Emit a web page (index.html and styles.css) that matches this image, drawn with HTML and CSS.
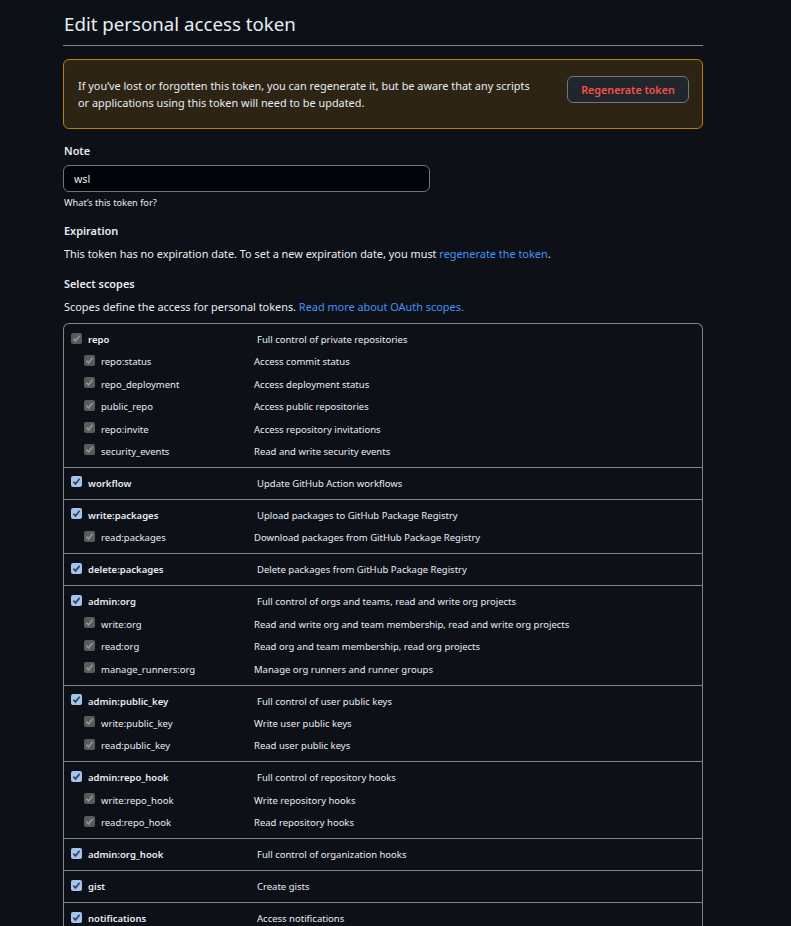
FILE: index.html
```html
<!DOCTYPE html>
<html lang="en">
<head>
<meta charset="utf-8">
<title>Edit personal access token</title>
<link rel="stylesheet" href="styles.css">
</head>
<body>
<div class="page">
  <h1 class="title">Edit personal access token</h1>

  <div class="flash">
    <p>If you’ve lost or forgotten this token, you can regenerate it, but be aware that any scripts<br>or applications using this token will need to be updated.</p>
    <button class="btn">Regenerate token</button>
  </div>

  <div class="label first">Note</div>
  <input class="input" type="text" value="wsl">
  <div class="hint">What’s this token for?</div>

  <div class="label">Expiration</div>
  <div class="text">This token has no expiration date. To set a new expiration date, you must <a href="#">regenerate the token</a>.</div>

  <div class="label">Select scopes</div>
  <div class="text">Scopes define the access for personal tokens. <a href="#">Read more about OAuth scopes.</a></div>

  <div class="scopes">
    <div class="group">
      <div class="row parent"><span class="cb off"></span><span class="name">repo</span><span class="desc">Full control of private repositories</span></div>
      <div class="row child"><span class="cb off"></span><span class="name">repo:status</span><span class="desc">Access commit status</span></div>
      <div class="row child"><span class="cb off"></span><span class="name">repo_deployment</span><span class="desc">Access deployment status</span></div>
      <div class="row child"><span class="cb off"></span><span class="name">public_repo</span><span class="desc">Access public repositories</span></div>
      <div class="row child"><span class="cb off"></span><span class="name">repo:invite</span><span class="desc">Access repository invitations</span></div>
      <div class="row child"><span class="cb off"></span><span class="name">security_events</span><span class="desc">Read and write security events</span></div>
    </div>
    <div class="group">
      <div class="row parent"><span class="cb on"></span><span class="name">workflow</span><span class="desc">Update GitHub Action workflows</span></div>
    </div>
    <div class="group">
      <div class="row parent"><span class="cb on"></span><span class="name">write:packages</span><span class="desc">Upload packages to GitHub Package Registry</span></div>
      <div class="row child"><span class="cb off"></span><span class="name">read:packages</span><span class="desc">Download packages from GitHub Package Registry</span></div>
    </div>
    <div class="group">
      <div class="row parent"><span class="cb on"></span><span class="name">delete:packages</span><span class="desc">Delete packages from GitHub Package Registry</span></div>
    </div>
    <div class="group">
      <div class="row parent"><span class="cb on"></span><span class="name">admin:org</span><span class="desc">Full control of orgs and teams, read and write org projects</span></div>
      <div class="row child"><span class="cb off"></span><span class="name">write:org</span><span class="desc">Read and write org and team membership, read and write org projects</span></div>
      <div class="row child"><span class="cb off"></span><span class="name">read:org</span><span class="desc">Read org and team membership, read org projects</span></div>
      <div class="row child"><span class="cb off"></span><span class="name">manage_runners:org</span><span class="desc">Manage org runners and runner groups</span></div>
    </div>
    <div class="group">
      <div class="row parent"><span class="cb on"></span><span class="name">admin:public_key</span><span class="desc">Full control of user public keys</span></div>
      <div class="row child"><span class="cb off"></span><span class="name">write:public_key</span><span class="desc">Write user public keys</span></div>
      <div class="row child"><span class="cb off"></span><span class="name">read:public_key</span><span class="desc">Read user public keys</span></div>
    </div>
    <div class="group">
      <div class="row parent"><span class="cb on"></span><span class="name">admin:repo_hook</span><span class="desc">Full control of repository hooks</span></div>
      <div class="row child"><span class="cb off"></span><span class="name">write:repo_hook</span><span class="desc">Write repository hooks</span></div>
      <div class="row child"><span class="cb off"></span><span class="name">read:repo_hook</span><span class="desc">Read repository hooks</span></div>
    </div>
    <div class="group">
      <div class="row parent"><span class="cb on"></span><span class="name">admin:org_hook</span><span class="desc">Full control of organization hooks</span></div>
    </div>
    <div class="group">
      <div class="row parent"><span class="cb on"></span><span class="name">gist</span><span class="desc">Create gists</span></div>
    </div>
    <div class="group">
      <div class="row parent"><span class="cb on"></span><span class="name">notifications</span><span class="desc">Access notifications</span></div>
    </div>
  </div>
</div>
</body>
</html>
```
FILE: styles.css
```css
html, body {
  margin: 0;
  background: #0d1117;
}
body {
  color: #e6edf3;
  font-family: "Noto Sans", "Open Sans", sans-serif;
  font-size: 10.9px;
}
.page {
  width: 640px;
  margin-left: 63px;
  padding-bottom: 40px;
}
.title {
  margin: 0;
  padding: 8px 0 6px 1px;
  font-size: 18.7px;
  font-weight: 400;
  line-height: 31px;
  border-bottom: 1px solid #7d8590;
}
.flash {
  margin-top: 13px;
  display: flex;
  justify-content: space-between;
  align-items: flex-start;
  padding: 17px 13px 17px 14px;
  border: 1px solid #bb8009;
  border-radius: 6px;
  background: #2e2413;
}
.flash p {
  margin: 0;
  font-size: 10.9px;
  line-height: 17px;
}
.btn {
  margin-top: -1px;
  width: 122px;
  height: 27px;
  box-sizing: border-box;
  padding: 0;
  background: #21262d;
  border: 1px solid #6e7681;
  border-radius: 6px;
  color: #f85149;
  font-family: inherit;
  font-weight: 600;
  font-size: 10.7px;
}
.label {
  margin-top: 12px;
  padding-left: 1px;
  font-weight: 600;
  line-height: 18px;
}
.label.first {
  margin-top: 13px;
}
.input {
  display: block;
  margin-top: 5px;
  width: 367px;
  height: 27px;
  box-sizing: border-box;
  background: #010409;
  border: 1px solid #6e7681;
  border-radius: 6px;
  padding: 0 10px;
  color: #e6edf3;
  font-family: inherit;
  font-size: 10.6px;
  outline: none;
}
.hint {
  margin-top: 4px;
  padding-left: 1px;
  font-size: 9.2px;
  line-height: 14px;
}
.text {
  margin-top: 5px;
  padding-left: 1px;
  line-height: 18px;
}
.text a {
  color: #4493f8;
  text-decoration: none;
}
.scopes {
  margin-top: 7px;
  border: 1px solid #7d8590;
  border-bottom: none;
  border-radius: 6px 6px 0 0;
}
.group {
  display: flex;
  flex-direction: column;
  gap: 6.4px;
  padding: 7.5px 0;
}
.group + .group {
  border-top: 1px solid #7d8590;
}
.row {
  display: flex;
  align-items: center;
  height: 16px;
  font-size: 9.5px;
}
.row.parent {
  padding-left: 7px;
}
.row.child {
  padding-left: 20px;
}
.cb {
  flex: none;
  width: 11px;
  height: 11px;
  margin-right: 6px;
  margin-top: -3px;
  border-radius: 2px;
  background-repeat: no-repeat;
  background-position: center;
}
.cb.on {
  background-color: #a2c4ee;
  background-image: url("data:image/svg+xml;utf8,<svg xmlns='http://www.w3.org/2000/svg' viewBox='0 0 11 11' width='11' height='11'><polyline points='2.4,5.6 4.5,7.9 8.7,2.8' fill='none' stroke='%23384456' stroke-width='1.7'/></svg>");
}
.cb.off {
  background-color: #5a5a5a;
  background-image: url("data:image/svg+xml;utf8,<svg xmlns='http://www.w3.org/2000/svg' viewBox='0 0 11 11' width='11' height='11'><polyline points='2.4,5.6 4.5,7.9 8.7,2.8' fill='none' stroke='%23939393' stroke-width='1.7'/></svg>");
}
.parent .name {
  width: 169px;
  font-weight: 600;
}
.child .name {
  width: 153px;
}
```
